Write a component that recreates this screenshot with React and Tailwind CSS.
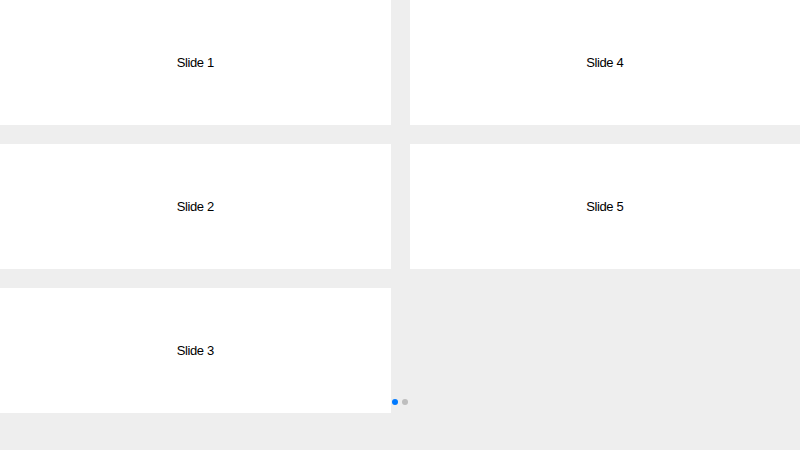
export default function App() {
  const left = ["Slide 1", "Slide 2", "Slide 3"];
  const right = ["Slide 4", "Slide 5"];
  const Slide = ({ label }) => (
    <div className="h-[125px] bg-white flex items-center justify-center pt-[1px] text-[13px] tracking-[-0.4px] text-black" style={{ fontFamily: '"Liberation Sans", Arial, sans-serif' }}>
      {label}
    </div>
  );
  return (
    <div className="relative w-[800px] h-[450px] bg-[#eeeeee] overflow-hidden">
      <div className="grid grid-cols-[390.5px_390.5px] gap-x-[19px]">
        <div className="flex flex-col gap-y-[18.75px]">
          {left.map((l) => <Slide key={l} label={l} />)}
        </div>
        <div className="flex flex-col gap-y-[18.75px]">
          {right.map((l) => <Slide key={l} label={l} />)}
        </div>
      </div>
      <div className="absolute left-0 right-0 top-[398.5px] flex justify-center gap-[4px]">
        <span className="w-[6px] h-[6px] rounded-full bg-[#007aff]" />
        <span className="w-[6px] h-[6px] rounded-full bg-[#bebebe]" />
      </div>
    </div>
  );
}
